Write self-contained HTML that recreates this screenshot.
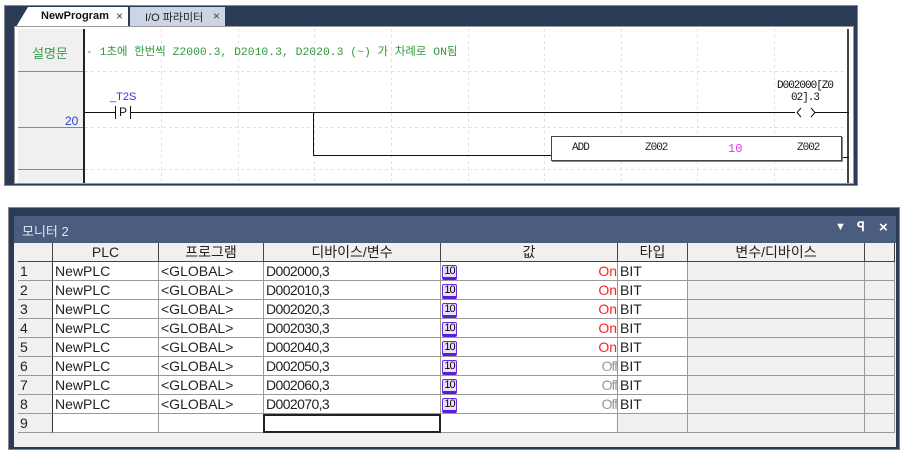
<!DOCTYPE html>
<html><head><meta charset="utf-8">
<style>
*{margin:0;padding:0;box-sizing:border-box}
body{width:908px;height:452px;background:#fff;position:relative;overflow:hidden;font-family:"Liberation Sans","Noto Sans CJK KR",sans-serif}
.a{position:absolute}
.t{position:absolute;white-space:nowrap}
.g{font-family:"Liberation Mono","Noto Sans CJK KR",monospace}
.hd{position:absolute;top:243px;height:19px;background:#f0f0f0;border-right:1px solid #444;border-bottom:1px solid #444;font-size:14px;text-align:center;line-height:19px;color:#222}
.c{position:absolute;height:19px;border-right:1px solid #999;border-bottom:1px solid #999;font-size:14px;line-height:18px;color:#222;overflow:hidden;white-space:nowrap;padding-left:2px}
.w{background:#fff}.gr{background:#f0f0f0}
.ic{display:inline-block;width:15px;height:15px;border:1.5px solid #6a2be0;border-radius:2px;font-size:11px;line-height:10px;text-align:center;color:#000;background:#e8e0ff;vertical-align:middle;border-bottom:3px solid #5a1fd0;letter-spacing:-1px}
</style></head><body>
<div class="a" style="left:4px;top:5px;width:854px;height:181px;background:#2b3a55;border:1px solid #888"></div>
<div class="a" style="left:16px;top:7px;width:112px;height:20px;background:#fff;clip-path:polygon(12px 0,100% 0,100% 100%,0 100%)"></div>
<div class="t" style="left:41px;top:10px;font-size:11px;font-weight:bold;color:#111">NewProgram</div>
<div class="t" style="left:116px;top:9px;font-size:12px;color:#444">×</div>
<div class="a" style="left:130px;top:7px;width:95px;height:19px;background:#cdd5e5"></div>
<div class="t" style="left:145px;top:9px;font-size:11px;color:#222">I/O 파라미터</div>
<div class="t" style="left:213px;top:9px;font-size:12px;color:#444">×</div>
<div class="a" style="left:14px;top:26px;width:840px;height:158px;background:#fff;border:1px solid #999"></div>
<div class="a" style="left:18px;top:29px;width:65px;height:154px;background:#f0f0f0"></div>
<div class="a" style="left:18px;top:71px;width:65px;height:1px;background:#888"></div>
<div class="a" style="left:18px;top:127px;width:65px;height:1px;background:#888"></div>
<div class="a" style="left:18px;top:169px;width:65px;height:1px;background:#888"></div>
<div class="a" style="left:83px;top:29px;width:2px;height:154px;background:#222"></div>
<div class="a" style="left:847px;top:29px;width:2px;height:154px;background:#444"></div>
<svg class="a" style="left:85px;top:29px" width="762" height="154">
<g stroke="#dde0f5" stroke-dasharray="3,3" stroke-width="1">
<line x1="0" y1="42.5" x2="762" y2="42.5"/><line x1="0" y1="98.5" x2="762" y2="98.5"/><line x1="0" y1="140.5" x2="762" y2="140.5"/>
<line x1="76.5" y1="0" x2="76.5" y2="154"/><line x1="153.5" y1="0" x2="153.5" y2="154"/><line x1="229.5" y1="0" x2="229.5" y2="154"/><line x1="306.5" y1="0" x2="306.5" y2="154"/><line x1="383.5" y1="0" x2="383.5" y2="154"/><line x1="459.5" y1="0" x2="459.5" y2="154"/><line x1="536.5" y1="0" x2="536.5" y2="154"/><line x1="612.5" y1="0" x2="612.5" y2="154"/><line x1="689.5" y1="0" x2="689.5" y2="154"/>
</g></svg>
<div class="t" style="left:32px;top:43px;font-size:13px;color:#3c9a4c">설명문</div>
<div class="t g" style="left:86px;top:43px;font-size:11.4px;color:#2f9a3c">- 1초에 한번씩 Z2000.3, D2010.3, D2020.3 (~) 가 차례로 ON됨</div>
<div class="t" style="left:65px;top:114px;font-size:12px;color:#2b3ad8">20</div>
<div class="t" style="left:110px;top:91px;font-size:11px;color:#2b3ad8">_T2S</div>
<svg class="a" style="left:85px;top:100px" width="764" height="62">
<g stroke="#111" stroke-width="1" fill="none">
<line x1="0" y1="12.5" x2="30" y2="12.5"/><line x1="30.5" y1="6" x2="30.5" y2="19"/>
<line x1="45.5" y1="6" x2="45.5" y2="19"/><line x1="46" y1="12.5" x2="710" y2="12.5"/>
<line x1="228.5" y1="12" x2="228.5" y2="55"/><line x1="228" y1="55.5" x2="466" y2="55.5"/>
<path d="M716 8 L712 12.5 L716 17"/><path d="M726 8 L730 12.5 L726 17"/>
<line x1="730" y1="12.5" x2="764" y2="12.5"/>
<line x1="756" y1="57.5" x2="764" y2="57.5"/>
</g></svg>
<div class="t" style="left:119px;top:105px;font-size:12px;color:#111">P</div>
<div class="t g" style="left:777px;top:80px;font-size:11px;color:#111;letter-spacing:-1px;line-height:12px;text-align:center">D002000[Z0<br>02].3</div>
<div class="a" style="left:551px;top:136px;width:291px;height:25px;background:#fff;border:1px solid #444;box-shadow:1px 1px 0 #888"></div>
<div class="t g" style="left:572px;top:142px;font-size:11px;color:#222;letter-spacing:-1px">ADD</div>
<div class="t g" style="left:645px;top:142px;font-size:11px;color:#222;letter-spacing:-1px">Z002</div>
<div class="t g" style="left:728px;top:142px;font-size:12px;color:#ee33ee">10</div>
<div class="t g" style="left:797px;top:142px;font-size:11px;color:#222;letter-spacing:-1px">Z002</div>

<div class="a" style="left:8px;top:207px;width:892px;height:243px;background:#2b3a55;border:1px solid #888"></div>
<div class="a" style="left:14px;top:216px;width:882px;height:27px;background:#4b5d7f"></div>
<div class="t" style="left:22px;top:221px;font-size:13px;color:#dfe6f2">모니터 2</div>
<div class="t" style="left:835px;top:221px;font-size:11px;color:#fff">▼</div>
<div class="t" style="left:857px;top:219px;font-size:13px;color:#fff;font-weight:bold">ꟼ</div>
<div class="t" style="left:879px;top:219px;font-size:15px;color:#fff;font-weight:bold">×</div>
<div class="a" style="left:14px;top:243px;width:882px;height:204px;background:#f0f0f0"></div>
<div class="hd" style="left:18px;width:35px"></div>
<div class="hd" style="left:53px;width:106px">PLC</div>
<div class="hd" style="left:159px;width:105px">프로그램</div>
<div class="hd" style="left:264px;width:177px">디바이스/변수</div>
<div class="hd" style="left:441px;width:177px">값</div>
<div class="hd" style="left:618px;width:70px">타입</div>
<div class="hd" style="left:688px;width:177px">변수/디바이스</div>
<div class="hd" style="left:865px;width:30px"></div>
<div id="rows"></div>
<script>
var h='';
for(var i=1;i<=9;i++){
 var y=262+(i-1)*19;
 var s='top:'+y+'px;';
 var on=i<=5;
 h+='<div class="c gr" style="'+s+'left:18px;width:35px;border-right-color:#333">'+i+'</div>';
 if(i<9){
 h+='<div class="c w" style="'+s+'left:53px;width:106px">NewPLC</div>';
 h+='<div class="c w" style="'+s+'left:159px;width:105px">&lt;GLOBAL&gt;</div>';
 h+='<div class="c w" style="'+s+'left:264px;width:177px;font-size:14px;letter-spacing:-0.6px">D0020'+(i-1)+'0,3</div>';
 h+='<div class="c w" style="'+s+'left:441px;width:177px;padding-left:1px"><span class="ic">10</span><span style="position:absolute;right:0;top:0;color:'+(on?'#f22':'#999')+';letter-spacing:'+(on?'0':'-1px')+'">'+(on?'On':'Off')+'</span></div>';
 h+='<div class="c w" style="'+s+'left:618px;width:70px">BIT</div>';
 } else {
 h+='<div class="c w" style="'+s+'left:53px;width:106px"></div>';
 h+='<div class="c w" style="'+s+'left:159px;width:105px"></div>';
 h+='<div class="c w" style="'+s+'left:263px;width:178px;border:2px solid #222"></div>';
 h+='<div class="c w" style="'+s+'left:441px;width:177px"></div>';
 h+='<div class="c gr" style="'+s+'left:618px;width:70px"></div>';
 }
 h+='<div class="c gr" style="'+s+'left:688px;width:177px"></div>';
 h+='<div class="c gr" style="'+s+'left:865px;width:30px"></div>';
}
document.getElementById('rows').innerHTML=h;
</script>
</body></html>
